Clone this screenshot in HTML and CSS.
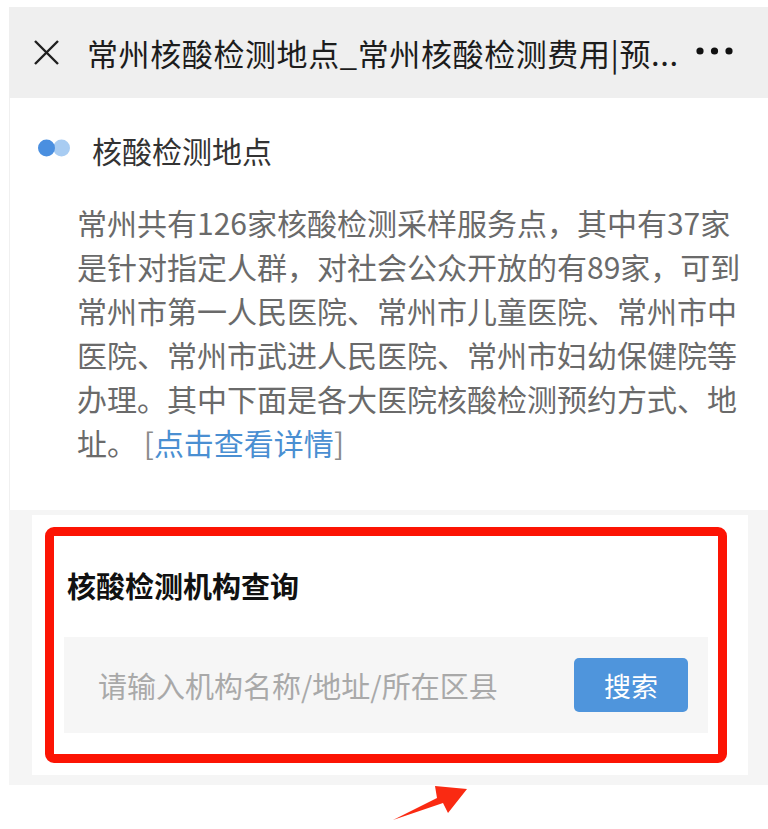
FILE: index.html
```html
<!DOCTYPE html>
<html lang="zh-CN">
<head>
    <meta charset="UTF-8">
    <meta name="viewport" content="width=device-width, initial-scale=1.0">
    <title>常州核酸检测地点</title>
    <link rel="stylesheet" href="styles.css">
</head>
<body>
    <div class="screen">
        <div class="topbar">
            <svg class="close" width="27" height="27" viewBox="0 0 27 27">
                <path d="M2 2 L25 25 M25 2 L2 25" stroke="#1f1f1f" stroke-width="2.4" fill="none"/>
            </svg>
            <div class="title">常州核酸检测地点_常州核酸检测费用|预...</div>
            <svg class="more" width="37" height="8" viewBox="0 0 37 8">
                <circle cx="4" cy="4" r="3.6" fill="#111"/>
                <circle cx="18.5" cy="4" r="3.6" fill="#111"/>
                <circle cx="33" cy="4" r="3.6" fill="#111"/>
            </svg>
        </div>

        <div class="intro">
            <div class="intro-head">
                <svg class="dot" width="32" height="18" viewBox="0 0 32 18">
                    <circle cx="23.5" cy="9" r="8.5" fill="#a8ccf2"/>
                    <circle cx="8.5" cy="9" r="8.5" fill="#4a8fe0"/>
                </svg>
                <span>核酸检测地点</span>
            </div>
            <p class="intro-text">常州共有126家核酸检测采样服务点，其中有37家是针对指定人群，对社会公众开放的有89家，可到常州市第一人民医院、常州市儿童医院、常州市中医院、常州市武进人民医院、常州市妇幼保健院等办理。其中下面是各大医院核酸检测预约方式、地址。 <a href="#" class="detail">[<span class="more-link">点击查看详情</span>]</a></p>
        </div>

        <div class="band">
            <div class="card">
                <div class="marked">
                    <div class="query-title">核酸检测机构查询</div>
                    <div class="search">
                        <input type="text" placeholder="请输入机构名称/地址/所在区县">
                        <button class="search-btn">搜索</button>
                    </div>
                </div>
            </div>
        </div>

        <svg class="arrow" width="80" height="40" viewBox="0 0 80 40">
            <polygon points="3,37 47,15 45,3 77,6 58,30 53,20" fill="#fa2a12"/>
        </svg>
    </div>
</body>
</html>
```

FILE: styles.css
```css
body{
    margin: 0;
    background: #fff;
    font-family: "Noto Sans CJK SC", "Noto Sans", sans-serif;
}
.screen{
    padding: 7px 0 0 9px;
}
.topbar{
    height: 91px;
    background-color: #efefef;
    display: flex;
    align-items: center;
    padding-left: 24px;
    padding-right: 35px;
}
.close{
    flex: none;
}
.title{
    flex: 1;
    margin-left: 27px;
    font-size: 31px;
    letter-spacing: 0.6px;
    color: #1c1c1c;
    white-space: nowrap;
    overflow: hidden;
}
.more{
    flex: none;
    margin-left: 10px;
    margin-bottom: 4px;
}

.intro{
    border-left: 1px solid #f0f0f0;
    padding: 30px 0 46px 28px;
}
.intro-head{
    display: flex;
    align-items: center;
    height: 44px;
    font-size: 30px;
    color: #333;
}
.dot{
    margin-right: 22px;
    margin-top: -5px;
}
.intro-text{
    margin: 28px 0 0 39px;
    width: 668px;
    font-size: 30px;
    line-height: 44px;
    color: #6a6a6a;
}
.detail{
    display: inline-block;
    color: #8a8a8a;
    text-decoration: none;
}
.more-link{
    color: #4a8fd2;
}

.band{
    background-color: #f5f5f5;
    padding: 5px 20px 10px 23px;
}
.card{
    background-color: #fff;
    padding: 12px 21px 12px 13px;
}
.marked{
    border: 9px solid #fc1404;
    border-radius: 9px;
    padding: 29px 10px 21px 10px;
}
.query-title{
    font-size: 29px;
    line-height: 40px;
    font-weight: bold;
    color: #111;
    padding-left: 3px;
}
.search{
    margin-top: 32px;
    height: 96px;
    display: flex;
    align-items: center;
    background-color: #f6f6f6;
    padding: 0 20px 0 34px;
}
.search input{
    flex: 1;
    min-width: 0;
    border: none;
    outline: none;
    background: transparent;
    font-family: inherit;
    font-size: 29px;
    color: #333;
    padding: 0;
}
.search input::placeholder{
    color: #a9a9a9;
}
.search-btn{
    width: 114px;
    height: 54px;
    border: none;
    border-radius: 5px;
    background-color: #4f95dc;
    color: #fff;
    font-family: inherit;
    font-size: 27px;
}

.arrow{
    display: block;
    margin-left: 381px;
    margin-top: -2px;
}
```
